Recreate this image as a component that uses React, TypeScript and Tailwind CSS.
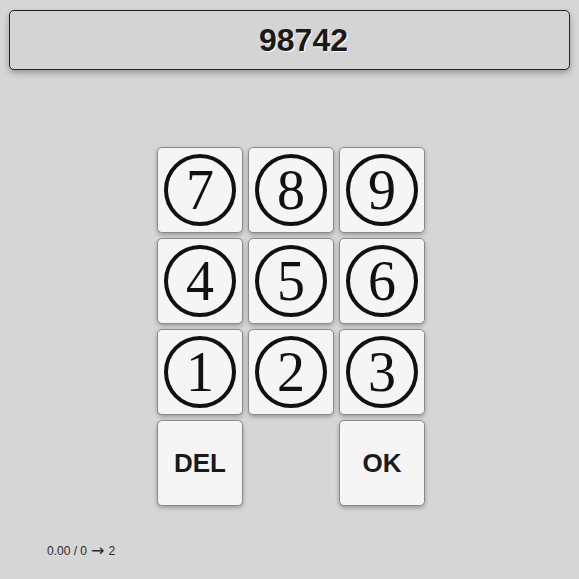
const DIGITS = ['7', '8', '9', '4', '5', '6', '1', '2', '3'];

const key =
  'flex h-[86px] w-[86px] items-center justify-center rounded-[5px] border border-[#8a8a8a] bg-[#f5f5f5] shadow-[0_2px_4px_rgb(0_0_0/0.28)]';

export default function App() {
  return (
    <div className="relative h-[579px] w-[579px] overflow-hidden bg-[#d6d6d6] font-['Liberation_Sans',Arial,sans-serif]">
      <div className="px-[9px] pt-[10px]">
        <div className="flex h-[60px] items-center justify-center rounded-[5px] border border-[#222] bg-[#d4d4d4] pl-[28px] shadow-[0_3px_6px_rgb(0_0_0/0.3)]">
          <span className="text-[32px] leading-none font-bold text-[#1a1a1a] [text-shadow:1px_1px_0_#fff]">98742</span>
        </div>
      </div>

      <div className="mt-[77px] grid w-fit grid-cols-[86px_86px_86px] gap-[5px] pl-[157px]">
        {DIGITS.map((d) => (
          <div key={d} className={key}>
            <div className="flex h-[72px] w-[72px] items-center justify-center rounded-full border-[4px] border-[#111]">
              <span className="font-['Liberation_Serif','Times_New_Roman',serif] text-[56px] leading-none text-[#111]">
                {d}
              </span>
            </div>
          </div>
        ))}
        <div className={key}>
          <span className="text-[26px] font-bold text-[#1a1a1a]">DEL</span>
        </div>
        <div />
        <div className={key}>
          <span className="text-[26px] font-bold text-[#1a1a1a]">OK</span>
        </div>
      </div>

      <p className="mt-[37px] flex items-center pl-[47px] text-[12px] leading-none text-[#2a2a2a]">
        <span>0.00 / 0</span>
        <span className="mx-[4px] font-['DejaVu_Sans',sans-serif] text-[16px] leading-none">→</span>
        <span>2</span>
      </p>
    </div>
  );
}
